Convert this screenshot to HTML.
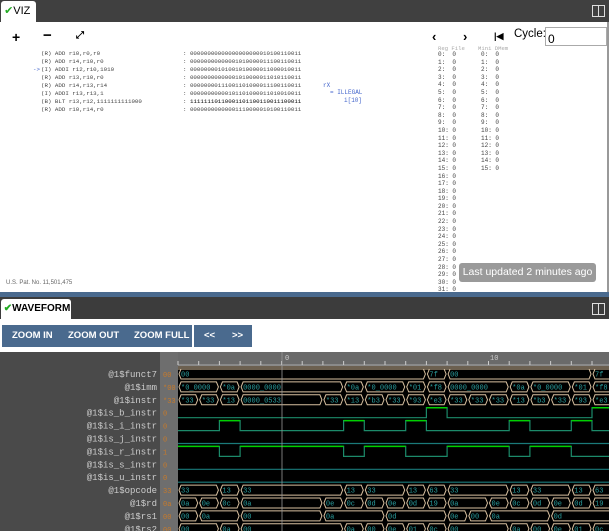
<!DOCTYPE html><html><head><style>
body{margin:0;width:609px;height:531px;overflow:hidden;background:#fff;font-family:"Liberation Sans",sans-serif;position:relative}
.a{position:absolute}
.mono{font-family:"Liberation Mono",monospace}
.btn{position:absolute;top:325px;height:22px;background:#4a6a8e;color:#fff;font-size:9.5px;font-weight:bold;line-height:22px;white-space:nowrap}
.ins{position:absolute;font-family:"Liberation Mono",monospace;font-size:5.8px;line-height:8px;color:#444;white-space:pre}
</style></head><body>
<div class="a" style="left:0;top:0;width:609px;height:22px;background:#404040"></div>
<div class="a" style="left:1px;top:1px;width:35px;height:22px;background:#fff;border-radius:3px 3px 0 0;font-size:11px;line-height:20px">&nbsp;<span style="color:#2a2">✔</span>VIZ</div>
<div class="a" style="left:592px;top:5px;width:11px;height:10px;border:1px solid #ddd;"><div style="margin-left:5px;width:1px;height:10px;background:#ddd"></div></div>
<div class="a" style="left:607px;top:22px;width:2px;height:270px;background:#999"></div>
<div class="a" style="left:12px;top:29px;font-size:14px;font-weight:bold">+</div>
<div class="a" style="left:43px;top:27px;font-size:15px;font-weight:bold">−</div>
<div class="a" style="left:76px;top:30px;font-size:10px;font-weight:bold">⤢</div>
<div class="ins" style="left:41px;top:50px">(R) ADD r10,r0,r0
(R) ADD r14,r10,r0
(I) ADDI r12,r10,1010
(R) ADD r13,r10,r0
(R) ADD r14,r13,r14
(I) ADDI r13,r13,1
(B) BLT r13,r12,1111111111000
(R) ADD r10,r14,r0</div>
<div class="ins" style="left:33px;top:66px;color:#46c">-&gt;</div>
<div class="ins" style="left:183px;top:50px">: 00000000000000000000010100110011
: 00000000000001010000011100110011
: 00000000101001010000011000010011
: 00000000000001010000011010110011
: 00000000111001101000011100110011
: 00000000000101101000011010010011
: <span style="color:#000">11111110110001101100110011100011</span>
: 00000000000001110000010100110011</div>
<div class="a mono" style="left:323px;top:82px;font-size:6px;color:#46c">rX</div>
<div class="a mono" style="left:330px;top:89px;font-size:6px;color:#46c">= ILLEGAL</div>
<div class="a mono" style="left:344px;top:97px;font-size:6px;color:#46c">i[10]</div>
<div class="a" style="left:432px;top:29px;font-size:13px;font-weight:bold">‹</div>
<div class="a" style="left:463px;top:29px;font-size:13px;font-weight:bold">›</div>
<div class="a" style="left:494px;top:31px;font-size:9px;font-weight:bold">|◀</div>
<div class="a" style="left:514px;top:28px;font-size:11.5px">Cycle:</div>
<div class="a" style="left:545px;top:27px;width:62px;height:19px;border:1px solid #aaa;font-size:12px;line-height:22px;padding-left:2px;box-sizing:border-box;background:#fff">0</div>
<div class="a mono" style="left:438px;top:45px;font-size:5.6px;color:#aaa">Reg File</div>
<div class="a mono" style="left:478px;top:45px;font-size:5.6px;color:#aaa">Mini DMem</div>
<div class="a mono" id="rf" style="left:438px;top:51px;font-size:6px;line-height:7.6px;color:#444;white-space:pre"></div>
<div class="a mono" id="dm" style="left:481px;top:51px;font-size:6px;line-height:7.6px;color:#444;white-space:pre"></div>
<div class="a" style="left:459px;top:263px;width:137px;height:19px;background:#9a9a9a;border-radius:3px;color:#fff;font-size:10.5px;line-height:19px;text-align:center">Last updated 2 minutes ago</div>
<div class="a" style="left:6px;top:280px;font-size:6px;color:#666">U.S. Pat. No. 11,501,475</div>
<div class="a" style="left:0;top:292px;width:609px;height:5px;background:#4a6a8e"></div>
<div class="a" style="left:0;top:297px;width:609px;height:22px;background:#3c3c3c"></div>
<div class="a" style="left:1px;top:299px;width:70px;height:20px;background:#fff;border-radius:3px 3px 0 0;font-size:10px;line-height:20px;font-weight:bold">&nbsp;<span style="color:#2a2">✔</span>WAVEFORM</div>
<div class="a" style="left:592px;top:303px;width:11px;height:10px;border:1px solid #ddd;"><div style="margin-left:5px;width:1px;height:10px;background:#ddd"></div></div>
<div class="btn" style="left:2px;width:190px"><span style="position:absolute;left:10px">ZOOM IN</span><span style="position:absolute;left:66px">ZOOM OUT</span><span style="position:absolute;left:132px">ZOOM FULL</span></div>
<div class="btn" style="left:194px;width:58px"><span style="position:absolute;left:10px">&lt;&lt;</span><span style="position:absolute;left:38px">&gt;&gt;</span></div>
<svg class="a" style="left:0;top:352px" width="609" height="179" id="wv"></svg>
<script>
var s='';for(var i=0;i<32;i++){s+=(i+':').padEnd(4)+'0\n';}document.getElementById('rf').textContent=s;
var d='';for(var i=0;i<16;i++){d+=(i+':').padEnd(4)+'0\n';}document.getElementById('dm').textContent=d;
var W=20.7,X0=178,o='';
function X(c){return X0+W*c}
o+='<rect x="0" y="0" width="160" height="179" fill="#4a4a4a"/><rect x="160" y="0" width="18" height="179" fill="#6e6e6e"/><rect x="178" y="0" width="431" height="179" fill="#000"/><rect x="178" y="0" width="431" height="14" fill="#6a6a6a"/><line x1="178" y1="13" x2="609" y2="13" stroke="#aaa"/>';
for(var c=0;c<21;c++){var x=178+c*20.7;o+='<line x1="'+x+'" y1="9" x2="'+x+'" y2="13" stroke="#ccc"/>';}
o+='<text x="285" y="8" font-size="7" fill="#ccc" font-family="Liberation Mono">0</text><text x="490" y="8" font-size="7" fill="#ccc" font-family="Liberation Mono">10</text>';
o+='<line x1="178" y1="15" x2="609" y2="15" stroke="#d8c0a0"/><line x1="178" y1="17" x2="609" y2="17" stroke="#d8c0a0"/>';
var rows=[
['funct7','00','b',[[0,'00'],[12,'7f'],[13,'00'],[20,'7f']]],
['imm','*00','b',[[0,'*0_0000'],[2,'*0a'],[3,'0000_0000'],[8,'*0a'],[9,'*0_0000'],[11,'*01'],[12,'*f8'],[13,'0000_0000'],[16,'*0a'],[17,'*0_0000'],[19,'*01'],[20,'*f8']]],
['instr','*33','b',[[0,'*33'],[1,'*33'],[2,'*13'],[3,'0000_0533'],[7,'*33'],[8,'*13'],[9,'*b3'],[10,'*33'],[11,'*93'],[12,'*e3'],[13,'*33'],[14,'*33'],[15,'*33'],[16,'*13'],[17,'*b3'],[18,'*33'],[19,'*93'],[20,'*e3']]],
['is_b_instr','0','l',[12,20]],
['is_i_instr','0','l',[2,8,11,16,19]],
['is_j_instr','0','l',[]],
['is_r_instr','1','l',[0,1,3,4,5,6,7,9,10,13,14,15,17,18]],
['is_s_instr','0','l',[]],
['is_u_instr','0','l',[]],
['opcode','33','b',[[0,'33'],[2,'13'],[3,'33'],[8,'13'],[9,'33'],[11,'13'],[12,'63'],[13,'33'],[16,'13'],[17,'33'],[19,'13'],[20,'63']]],
['rd','0a','b',[[0,'0a'],[1,'0e'],[2,'0c'],[3,'0a'],[7,'0e'],[8,'0c'],[9,'0d'],[10,'0e'],[11,'0d'],[12,'19'],[13,'0a'],[15,'0e'],[16,'0c'],[17,'0d'],[18,'0e'],[19,'0d'],[20,'19']]],
['rs1','00','b',[[0,'00'],[1,'0a'],[3,'00'],[7,'0a'],[10,'0d'],[13,'0e'],[14,'00'],[15,'0a'],[18,'0d']]],
['rs2','00','b',[[0,'00'],[2,'0a'],[3,'00'],[8,'0a'],[9,'00'],[10,'0e'],[11,'01'],[12,'0c'],[13,'00'],[16,'0a'],[17,'00'],[18,'0e'],[19,'01'],[20,'0c']]]];
rows.forEach(function(r,i){
 var cy=22+i*12.9, t=cy-5, b=cy+5;
 o+='<text x="157" y="'+(cy+3)+'" text-anchor="end" font-size="9" fill="#ccc" font-family="Liberation Mono">@1$'+r[0]+'</text>';
 o+='<text x="163" y="'+(cy+3)+'" font-size="7" fill="#c87a2a" font-family="Liberation Mono">'+r[1]+'</text>';
 if(r[2]=='b'){
  var seg=r[3];
  for(var k=0;k<seg.length;k++){
   var x1=X(seg[k][0])+1,x2=(k+1<seg.length?X(seg[k+1][0]):620)-1;
   o+='<path d="M'+x1+' '+cy+' L'+(x1+2)+' '+t+' L'+(x2-2)+' '+t+' L'+x2+' '+cy+' L'+(x2-2)+' '+b+' L'+(x1+2)+' '+b+' Z" fill="none" stroke="#d8c0a0" stroke-width="1"/>';
   o+='<text x="'+(x1+2)+'" y="'+(cy+2.5)+'" font-size="7" fill="#2aa0a0" font-family="Liberation Mono">'+seg[k][1]+'</text>';
  }
 } else {
  var hi=r[3],p='',pv=null;
  for(var c=0;c<21;c++){var h=hi.indexOf(c)>=0;var y=h?t:b;var x=X(c);
   if(c==0)p='M'+x+' '+y;else if(h!=pv)p+=' L'+x+' '+(pv?t:b)+' L'+x+' '+y;
   pv=h;}
  p+=' L609 '+(pv?t:b);
  o+='<path d="'+p+'" fill="none" stroke="'+(hi.length?'#1c8a6a':'#1a7a7a')+'" stroke-width="1.2"/>';
  hi.forEach(function(c){o+='<line x1="'+X(c)+'" y1="'+t+'" x2="'+X(c+1)+'" y2="'+t+'" stroke="#00d000" stroke-width="1.5"/>';});
 }
});
o+='<line x1="282" y1="0" x2="282" y2="179" stroke="#999" stroke-width="0.8"/>';
document.getElementById('wv').innerHTML=o;
</script>
</body></html>
